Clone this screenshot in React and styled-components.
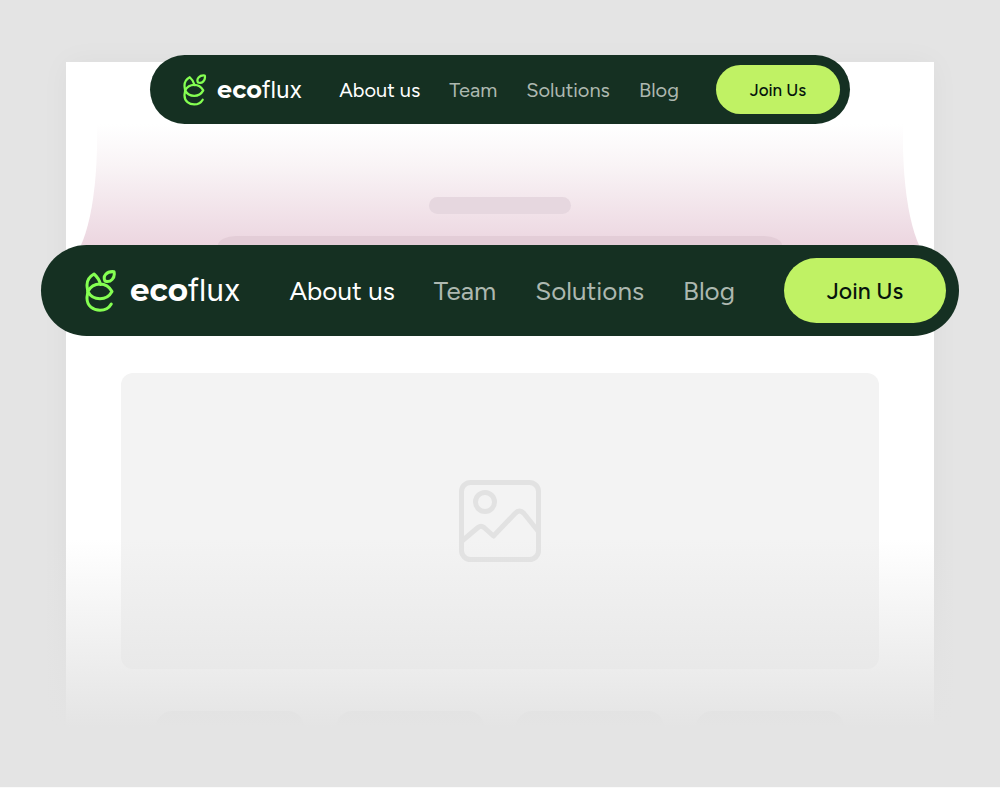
import React from "react";
import styled, { createGlobalStyle } from "styled-components";

const GlobalStyle = createGlobalStyle`
    * {
        box-sizing: border-box;
    }
    body {
        margin: 0;
        background: #fafafa;
        font-family: Figtree, Lato, "Open Sans", sans-serif;
    }
`;

const Stage = styled.div`
    min-height: calc(100vh - 1px);
    padding: 62px 66px 60px;
    background: #e4e4e4;
    overflow: hidden;
`;

const Sheet = styled.main`
    position: relative;
    display: flex;
    flex-direction: column;
    align-items: center;
    background: #fff;
    box-shadow: 0 0 28px rgba(0, 0, 0, 0.04);
`;

const Nav = styled.nav`
    z-index: 1;
    display: flex;
    align-items: center;
    justify-content: space-between;
    flex-shrink: 0;
    width: ${(props) => (props.$large ? "calc(100% + 50px)" : "700px")};
    margin-top: ${(props) => (props.$large ? "0" : "-7px")};
    padding: ${(props) =>
        props.$large ? "13px 13px 13px 44px" : "10px 10px 10px 33px"};
    border-radius: 46px;
    background: #153022;
    font-size: ${(props) => (props.$large ? "26px" : "20px")};
`;

const Brand = styled.a`
    display: flex;
    align-items: center;
    gap: ${(props) => (props.$large ? "13px" : "10px")};
    color: #fff;
    font-family: Inter, sans-serif;
    font-size: ${(props) => (props.$large ? "30px" : "23px")};
    line-height: 1;
    text-decoration: none;

    & > svg {
        width: ${(props) => (props.$large ? "32px" : "24px")};
        height: ${(props) => (props.$large ? "42px" : "32px")};
    }

    & b {
        font-family: Montserrat, "DejaVu Sans", sans-serif;
        font-size: ${(props) => (props.$large ? "31px" : "24px")};
        font-weight: 700;
        line-height: 1;
    }
`;

const Links = styled.div`
    display: flex;
    gap: ${(props) => (props.$large ? "39px" : "29px")};
`;

const NavLink = styled.a`
    color: ${(props) => (props.$active ? "#fff" : "#adb8b0")};
    line-height: 1;
    text-decoration: none;
`;

const JoinButton = styled.button`
    width: ${(props) => (props.$large ? "162px" : "124px")};
    height: ${(props) => (props.$large ? "65px" : "49px")};
    border: 0;
    border-radius: 33px;
    background: #c0f264;
    color: #06140c;
    font-family: inherit;
    font-size: ${(props) => (props.$large ? "23px" : "17px")};
    font-weight: 500;
    cursor: pointer;
`;

const Hero = styled.section`
    position: relative;
    display: flex;
    flex-direction: column;
    align-items: center;
    justify-content: space-between;
    width: 100%;
    height: 121px;
    padding-top: 73px;
    background: linear-gradient(#fff, #f9f4f6 34%, #ecd6e0);
    overflow: hidden;

    /* white edges that curve outwards near the bottom */
    &::before,
    &::after {
        content: "";
        position: absolute;
        top: 0;
        width: 31px;
        height: 136px;
        background: #fff;
    }
    &::before {
        left: 0;
        border-bottom-right-radius: 31px 120px;
    }
    &::after {
        right: 0;
        border-bottom-left-radius: 31px 120px;
    }
`;

const HeroTag = styled.div`
    width: 142px;
    height: 17px;
    border-radius: 9px;
    background: #e6d7df;
`;

const HeroTitle = styled.div`
    width: 65%;
    height: 9px;
    border-radius: 18px 18px 0 0 / 9px 9px 0 0;
    background: #e3cdd7;
`;

const Picture = styled.section`
    display: flex;
    align-items: center;
    justify-content: center;
    width: calc(100% - 110px);
    height: 296px;
    margin-top: 37px;
    border-radius: 12px;
    background: #f3f3f3;
`;

const Cards = styled.section`
    display: grid;
    grid-template-columns: repeat(4, 1fr);
    gap: 32px;
    width: calc(100% - 180px);
    margin-top: 42px;
`;

const Card = styled.div`
    height: 16px;
    border-radius: 16px 16px 0 0;
    background: #dadada;
`;

const Fade = styled.div`
    position: absolute;
    right: -66px;
    bottom: -60px;
    left: -66px;
    height: 247px;
    background: linear-gradient(rgba(228, 228, 228, 0), #e4e4e4 187px);
    pointer-events: none;
`;

const LogoMark = () => (
    <svg
        viewBox="0 0 32 42"
        fill="none"
        stroke="#85ff52"
        strokeWidth="3"
        strokeLinecap="round"
        strokeLinejoin="round"
        aria-hidden="true"
    >
        <path d="M15.500 14.500C14.500 10 12.500 7 9 4C4.500 6.500 2 10 2 15C2 18 2.800 20 2.800 21.500C2.800 24 1.900 25.500 2 28.500C2.200 36 8 40.300 15 40.300C20 40.300 24 38 26.300 34" />
        <path d="M2.800 21.500C5.500 16.500 9.500 14 15 14C20.500 14 24.500 17 27 21.500C24.500 26 20.500 28.800 15 28.800C9.500 28.800 5.500 26.500 2.800 21.500Z" />
        <path d="M20 11C17.500 6 21.500 1 29 1.700C30.500 8 25.500 13 20 11Z" />
    </svg>
);

const PictureIcon = () => (
    <svg
        width="82"
        height="82"
        viewBox="0 0 82 82"
        fill="none"
        stroke="#e2e2e2"
        strokeWidth="5"
        aria-hidden="true"
    >
        <rect x="2.500" y="2.500" width="77" height="77" rx="9" />
        <circle cx="26" cy="22" r="9.500" />
        <path
            d="M3 61L19 47.500Q22 45 25 47.500L34.500 56L56 33.500Q60.500 28.500 65 33.500L79 51"
            strokeLinejoin="round"
        />
    </svg>
);

const links = ["About us", "Team", "Solutions", "Blog"];

const NavBar = ({ large, label }) => (
    <Nav $large={large} aria-label={label}>
        <Brand href="#" $large={large}>
            <LogoMark />
            <span>
                <b>eco</b>flux
            </span>
        </Brand>
        <Links $large={large}>
            {links.map((link, i) => (
                <NavLink key={link} href="#" $active={i === 0}>
                    {link}
                </NavLink>
            ))}
        </Links>
        <JoinButton type="button" $large={large}>
            Join Us
        </JoinButton>
    </Nav>
);

const App = () => (
    <>
        <GlobalStyle />
        <Stage>
            <Sheet>
                <NavBar label="Main" />
                <Hero>
                    <HeroTag />
                    <HeroTitle />
                </Hero>
                <NavBar large label="Main, enlarged" />
                <Picture>
                    <PictureIcon />
                </Picture>
                <Cards>
                    <Card />
                    <Card />
                    <Card />
                    <Card />
                </Cards>
                <Fade />
            </Sheet>
        </Stage>
    </>
);

export default App;
